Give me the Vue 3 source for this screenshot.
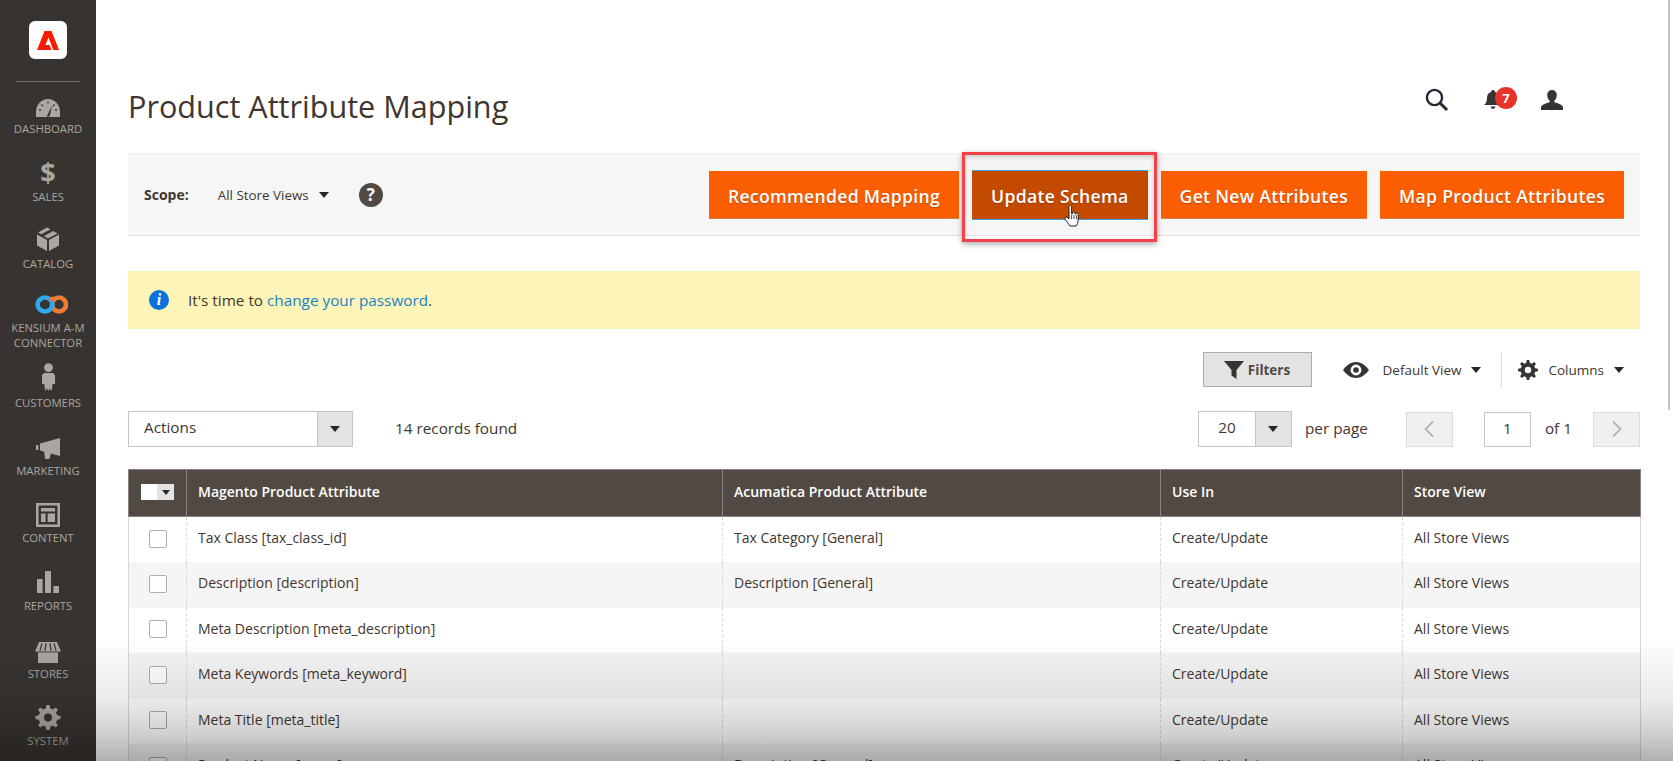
<template>
  <div class="page">
    <aside class="sidebar">
      <div class="logo-wrap">
        <div class="logo">
          <svg width="22" height="19" viewBox="0 0 22 19">
            <path d="M7.500 0h7L22 19h-5.600L11.500 6.500 8.400 14h4.100l2 5H0z" fill="#fa1a00" />
          </svg>
        </div>
      </div>
      <nav class="nav">
        <a class="nav-item">
          <svg width="32" height="30" viewBox="0 0 32 30">
            <path d="M4 28v-5a12 13 0 0 1 24 0v5z" fill="#aaa6a0" />
            <path d="M14.600 27.500l5.600-11 -2.600 11z" fill="#373330" />
            <path d="M7 21h2M9.500 15.500l1.500 1.500M16 12.500v2M22.500 15.500l-1.500 1.500M25 21h-2" stroke="#373330" stroke-width="1.300" />
          </svg>
          <span class="nav-label">Dashboard</span>
        </a>
        <a class="nav-item">
          <svg width="32" height="30" viewBox="0 0 32 30">
            <text x="16" y="25" text-anchor="middle" class="dollar">$</text>
          </svg>
          <span class="nav-label">Sales</span>
        </a>
        <a class="nav-item">
          <svg width="32" height="30" viewBox="0 0 32 30">
            <path d="M5 10.500l10 5.500v11l-10-5.500zM17 16l10-5.500v11l-10 5.500z" fill="#aaa6a0" />
            <path d="M6 8.500l9-5 3.600 1.800-9.200 5zM12 12l9.200-5 4.400 2.400-9.600 5.200z" fill="#aaa6a0" />
          </svg>
          <span class="nav-label">Catalog</span>
        </a>
        <a class="nav-item tall">
          <svg width="36" height="30" viewBox="0 0 36 30" class="kensium">
            <ellipse cx="27" cy="16.500" rx="7" ry="7" fill="none" stroke="#f07a2f" stroke-width="4.600" />
            <ellipse cx="13" cy="16.500" rx="7.400" ry="7" fill="none" stroke="#2fa8ee" stroke-width="4.600" />
            <path d="M18 11.500l4 -1.500" stroke="#f07a2f" stroke-width="4" />
          </svg>
          <span class="nav-label">Kensium A-M<br />Connector</span>
        </a>
        <a class="nav-item short">
          <svg width="32" height="30" viewBox="0 0 32 30">
            <circle cx="16.500" cy="4.600" r="4.400" fill="#aaa6a0" />
            <path d="M12 10h9l2 2v9h-2.400l-1 7-2-2.400-1.200 2.400-1.400-2.400-1.800 2.400-1-7H10v-9z" fill="#aaa6a0" />
          </svg>
          <span class="nav-label">Customers</span>
        </a>
        <a class="nav-item">
          <svg width="32" height="30" viewBox="0 0 32 30">
            <path d="M4 14h2.400v5H4zM8 12.500L28 7v18L8 19.500z" fill="#aaa6a0" />
            <path d="M12 20l7 2-1.600 6h-4.200z" fill="#aaa6a0" />
          </svg>
          <span class="nav-label">Marketing</span>
        </a>
        <a class="nav-item">
          <svg width="32" height="30" viewBox="0 0 32 30">
            <path d="M4 5h24v24H4zM6.600 7.600v18.800h18.800V7.600z" fill="#aaa6a0" />
            <path d="M9 10h14v3.400H9zM9 15.600h4.600v8.400H9zM15.600 15.600H23v8.400h-7.400z" fill="#aaa6a0" />
          </svg>
          <span class="nav-label">Content</span>
        </a>
        <a class="nav-item">
          <svg width="32" height="30" viewBox="0 0 32 30">
            <path d="M5 13h5.600v14H5zM13 5h6v22h-6zM21.400 20H27v7h-5.600z" fill="#aaa6a0" />
          </svg>
          <span class="nav-label">Reports</span>
        </a>
        <a class="nav-item">
          <svg width="32" height="30" viewBox="0 0 32 30">
            <path d="M7 8h18l4 9.400H3z" fill="#aaa6a0" />
            <path d="M10 9.400l-2 7M14 9.400l-1 7M18 9.400l1 7M22 9.400l2 7" stroke="#373330" stroke-width="1.300" />
            <path d="M6 18.400h20V29H6z" fill="#aaa6a0" />
          </svg>
          <span class="nav-label">Stores</span>
        </a>
        <a class="nav-item">
          <svg width="32" height="30" viewBox="0 0 32 30">
            <path :d="gearPath(16, 16.500, 12.600, 9.400, 4, 8)" fill="#aaa6a0" fill-rule="evenodd" />
          </svg>
          <span class="nav-label">System</span>
        </a>
      </nav>
    </aside>

    <main class="content">
      <header class="page-head">
        <h1>Product Attribute Mapping</h1>
        <div class="head-icons">
          <svg width="24" height="24" viewBox="0 0 24 24">
            <circle cx="9.500" cy="9.500" r="7.600" fill="none" stroke="#232a33" stroke-width="2.400" />
            <path d="M15 15l7 7" stroke="#232a33" stroke-width="3" />
          </svg>
          <span class="bell">
            <svg width="20" height="22" viewBox="0 0 20 22">
              <path d="M10 1a2 2 0 0 1 2 2c3 .8 4 3.400 4 6 0 4 1.400 5.600 3 7H1c1.600-1.400 3-3 3-7 0-2.600 1-5.200 4-6a2 2 0 0 1 2-2zM7.600 17.600h4.800a2.400 2.400 0 0 1-4.800 0z" fill="#373330" />
            </svg>
            <span class="badge">7</span>
          </span>
          <svg width="22" height="20" viewBox="0 0 22 20">
            <path d="M11 0c3 0 4.800 2 4.800 5 0 2.400-1 4.400-2.400 5.600v1.600c3 1 8.600 2.400 8.600 5.300V20H0v-2.500c0-2.900 5.600-4.300 8.600-5.300v-1.600C7.200 9.400 6.200 7.400 6.200 5c0-3 1.800-5 4.800-5z" fill="#373330" />
          </svg>
        </div>
      </header>

      <section class="scope-panel">
        <div class="scope">
          <span class="scope-label">Scope:</span>
          <span class="scope-value">All Store Views</span>
          <span class="caret"></span>
          <span class="help">?</span>
        </div>
        <div class="page-actions">
          <button class="action">Recommended Mapping</button>
          <span class="action-mark">
            <button class="action active">Update Schema</button>
            <span class="highlight"></span>
            <svg class="hand" width="16" height="22" viewBox="0 0 16 22">
              <path d="M5 1.500a1.300 1.300 0 0 1 2.600 0V9l1-.2V8a1.200 1.200 0 0 1 2.400 0v1l1-.1a1.100 1.100 0 0 1 2.200.4V14c0 3.500-1.500 6.500-2 7H6c-.8-1.500-4.600-6-5-7-.6-1.400.8-2.600 2-1.700L5 14z" fill="#fff" stroke="#222" stroke-width="1" />
              <path d="M7.600 10v4M10 10v4M12.400 10v4" stroke="#222" stroke-width=".8" />
            </svg>
          </span>
          <button class="action">Get New Attributes</button>
          <button class="action">Map Product Attributes</button>
        </div>
      </section>

      <div class="notice">
        <span class="info-dot">i</span>
        <span>It's time to <a class="link">change your password</a>.</span>
      </div>

      <div class="grid-tools">
        <button class="filters">
          <svg width="20" height="18" viewBox="0 0 20 18">
            <path d="M0 0h20l-7.500 9v9l-5-3.500V9z" fill="#373330" />
          </svg>
          Filters
        </button>
        <div class="view-switch">
          <svg width="26" height="16" viewBox="0 0 26 16">
            <path d="M13 0c6 0 10.500 4.500 13 8-2.500 3.500-7 8-13 8S2.500 11.500 0 8c2.500-3.500 7-8 13-8zm0 2.600a5.400 5.400 0 1 0 0 10.800 5.400 5.400 0 0 0 0-10.800z" fill="#373330" />
            <circle cx="13" cy="8" r="2.800" fill="#373330" />
          </svg>
          <span class="tool-text">Default View</span>
          <span class="caret"></span>
        </div>
        <div class="columns-switch">
          <svg width="20" height="20" viewBox="0 0 20 20">
            <path :d="gearPath(10, 10, 10, 7.400, 3.200, 8)" fill="#373330" fill-rule="evenodd" />
          </svg>
          <span class="tool-text">Columns</span>
          <span class="caret"></span>
        </div>
      </div>

      <div class="grid-pager">
        <div class="select actions-select">
          <span class="select-value">Actions</span>
          <span class="select-btn"><span class="caret"></span></span>
        </div>
        <span class="records">14 records found</span>
        <div class="pager">
          <div class="select size-select">
            <span class="select-value">20</span>
            <span class="select-btn"><span class="caret"></span></span>
          </div>
          <span class="per-page">per page</span>
          <span class="page-btn prev">
            <svg width="12" height="18" viewBox="0 0 12 18"><path d="M10 1.500L2.500 9l7.500 7.500" fill="none" stroke="#b5b2af" stroke-width="1.800" /></svg>
          </span>
          <span class="page-input">1</span>
          <span class="of-pages">of 1</span>
          <span class="page-btn next">
            <svg width="12" height="18" viewBox="0 0 12 18"><path d="M2 1.500L9.500 9 2 16.500" fill="none" stroke="#b5b2af" stroke-width="1.800" /></svg>
          </span>
        </div>
      </div>

      <table class="grid">
        <colgroup>
          <col class="col-check" />
          <col class="col-magento" />
          <col class="col-acumatica" />
          <col class="col-use" />
          <col class="col-store" />
        </colgroup>
        <thead>
          <tr>
            <th class="check-cell">
              <span class="head-check"><i></i><b><span class="caret"></span></b></span>
            </th>
            <th>Magento Product Attribute</th>
            <th>Acumatica Product Attribute</th>
            <th>Use In</th>
            <th>Store View</th>
          </tr>
        </thead>
        <tbody>
          <tr v-for="row in rows" :key="row.magento">
            <td class="check-cell"><span class="checkbox"></span></td>
            <td>{{ row.magento }}</td>
            <td>{{ row.acumatica }}</td>
            <td>Create/Update</td>
            <td>All Store Views</td>
          </tr>
        </tbody>
      </table>
    </main>

    <div class="scroll-thumb"></div>
    <div class="video-shade"></div>
  </div>
</template>

<script setup>
const rows = [
  { magento: "Tax Class [tax_class_id]", acumatica: "Tax Category [General]" },
  { magento: "Description [description]", acumatica: "Description [General]" },
  { magento: "Meta Description [meta_description]", acumatica: "" },
  { magento: "Meta Keywords [meta_keyword]", acumatica: "" },
  { magento: "Meta Title [meta_title]", acumatica: "" },
  { magento: "Product Name [name]", acumatica: "Description [General]" },
];

// cog outline, used by the System and Columns icons
function gearPath(cx, cy, rOut, rIn, hole, teeth) {
  const step = (Math.PI * 2) / teeth;
  let d = "";
  for (let i = 0; i < teeth; i++) {
    const a = i * step - Math.PI / 2;
    const pts = [
      [rIn, a - step * 0.3],
      [rOut, a - step * 0.16],
      [rOut, a + step * 0.16],
      [rIn, a + step * 0.3],
    ];
    for (const [r, t] of pts) {
      const x = (cx + r * Math.cos(t)).toFixed(2);
      const y = (cy + r * Math.sin(t)).toFixed(2);
      d += (d ? "L" : "M") + x + " " + y;
    }
  }
  d += "Z";
  d += `M${cx - hole} ${cy}a${hole} ${hole} 0 1 0 ${hole * 2} 0a${hole} ${hole} 0 1 0 ${-hole * 2} 0Z`;
  return d;
}
</script>

<style scoped>
.page {
  position: relative;
  display: flex;
  width: 1673px;
  height: 761px;
  overflow: hidden;
  background: #fff;
  font-family: "Open Sans", sans-serif;
  color: #41362f;
}
.sidebar {
  flex: 0 0 96px;
  background: #373330;
}
.logo-wrap {
  height: 82px;
  margin: 0 16px;
  padding-top: 21px;
  box-sizing: border-box;
  border-bottom: 1px solid #736e6a;
}
.logo {
  display: flex;
  align-items: center;
  justify-content: center;
  width: 38px;
  height: 38px;
  margin: 0 auto;
  background: #fff;
  border-radius: 6px;
}
.nav {
  display: flex;
  flex-direction: column;
  align-items: center;
}
.nav-item {
  display: flex;
  flex-direction: column;
  align-items: center;
  justify-content: flex-end;
  height: 67.600px;
  color: #aaa6a0;
}
.nav-item:first-child {
  height: 54px;
}
.nav-item.tall {
  height: 79px;
}
.nav-item.short {
  height: 60px;
}
.kensium {
  margin-left: 4px;
}
.nav-label {
  margin-top: 2px;
  font-size: 11.300px;
  line-height: 15px;
  text-align: center;
  text-transform: uppercase;
  white-space: nowrap;
}
.dollar {
  font-family: "Open Sans", sans-serif;
  font-size: 27px;
  font-weight: 700;
  fill: #aaa6a0;
}
.content {
  flex: 1;
  min-width: 0;
  padding: 0 33px 0 32px;
}
.page-head {
  display: flex;
  align-items: center;
  justify-content: space-between;
  height: 153px;
  padding-top: 58px;
  box-sizing: border-box;
}
h1 {
  margin: 0;
  font-size: 30.600px;
  font-weight: 400;
  line-height: 42px;
  color: #41362f;
}
.head-icons {
  display: flex;
  align-items: center;
  margin: -11px 77px 0 0;
}
.bell {
  position: relative;
  display: flex;
  margin: 0 38px 0 34px;
}
.badge {
  position: absolute;
  left: 12px;
  top: -2px;
  width: 22px;
  height: 22px;
  border-radius: 50%;
  background: #e8332a;
  color: #fff;
  font-size: 13px;
  font-weight: 700;
  line-height: 22px;
  text-align: center;
}
.scope-panel {
  display: flex;
  align-items: center;
  justify-content: space-between;
  height: 83px;
  padding: 0 16px;
  box-sizing: border-box;
  background: #f6f6f6;
  border-top: 1px solid #efefef;
  border-bottom: 1px solid #e3e3e3;
}
.scope {
  display: flex;
  align-items: center;
  font-size: 13.400px;
}
.scope-label {
  font-size: 14px;
  font-weight: 700;
  color: #41362f;
  margin-right: 29px;
}
.scope-value {
  color: #41362f;
  margin-right: 10px;
}
.help {
  width: 24px;
  height: 24px;
  margin-left: 30px;
  border-radius: 50%;
  background: #514943;
  color: #fff;
  font-size: 17px;
  font-weight: 700;
  line-height: 24px;
  text-align: center;
}
.caret {
  display: inline-block;
  width: 0;
  height: 0;
  border-left: 5px solid transparent;
  border-right: 5px solid transparent;
  border-top: 6px solid #2b2622;
}
.page-actions {
  display: flex;
  align-items: center;
  gap: 13px;
}
.action {
  height: 48px;
  padding: 3px 19px 0;
  border: 0;
  border-bottom: 1px solid #d9814a;
  background: #fa5e00;
  color: #fff;
  font-family: inherit;
  font-size: 17.600px;
  font-weight: 600;
  letter-spacing: 0.3px;
  text-shadow: 0 1px 1px rgba(0, 0, 0, 0.25);
}
.action.active {
  height: 50px;
  padding-top: 2px;
  border-top: 1px solid #3aa3e3;
  border-bottom: 1px solid #3aa3e3;
  background: #c44a00;
}
.action-mark {
  position: relative;
  display: flex;
}
.highlight {
  position: absolute;
  left: -10px;
  right: -9px;
  top: -18px;
  bottom: -22px;
  border: 3px solid #f2414b;
  box-shadow: 0 2px 6px rgba(0, 0, 0, 0.35), inset 0 2px 5px rgba(0, 0, 0, 0.2);
}
.hand {
  position: absolute;
  left: 92px;
  top: 35px;
}
.notice {
  display: flex;
  align-items: center;
  height: 58px;
  margin-top: 35px;
  padding-left: 21px;
  background: #fdf5b8;
  font-size: 15.300px;
  color: #41362f;
}
.info-dot {
  width: 20px;
  height: 20px;
  margin-right: 19px;
  border-radius: 50%;
  background: #0a72d8;
  color: #fff;
  font-family: "Liberation Serif", serif;
  font-size: 16px;
  font-style: italic;
  font-weight: 700;
  line-height: 20px;
  text-align: center;
}
.link {
  color: #1a82c4;
}
.grid-tools {
  display: flex;
  align-items: center;
  justify-content: flex-end;
  height: 35px;
  margin-top: 23px;
}
.filters {
  display: flex;
  align-items: center;
  justify-content: center;
  gap: 4px;
  width: 109px;
  height: 35px;
  border: 1px solid #adadad;
  background: #e3e3e3;
  color: #514943;
  font-family: inherit;
  font-size: 13.500px;
  font-weight: 700;
}
.view-switch,
.columns-switch {
  display: flex;
  align-items: center;
  height: 35px;
}
.view-switch {
  margin-left: 31px;
  padding-right: 20px;
  border-right: 1px solid #dcdcdc;
}
.columns-switch {
  margin: 0 16px 0 16px;
}
.view-switch svg {
  margin-right: 14px;
}
.columns-switch svg {
  margin-right: 10px;
}
.tool-text {
  margin-right: 10px;
  font-size: 13.500px;
  color: #41362f;
}
.grid-pager {
  display: flex;
  align-items: center;
  height: 36px;
  margin-top: 24px;
  font-size: 15.300px;
}
.select {
  display: flex;
  height: 36px;
  box-sizing: border-box;
  border: 1px solid #c7c5c3;
  background: #fff;
}
.select-value {
  flex: 1;
  line-height: 31px;
  color: #41362f;
}
.select-btn {
  display: flex;
  align-items: center;
  justify-content: center;
  background: #e3e3e3;
  border-left: 1px solid #c7c5c3;
}
.actions-select {
  width: 225px;
}
.actions-select .select-value {
  padding-left: 15px;
}
.actions-select .select-btn {
  width: 34px;
}
.records {
  margin: -2px 0 0 42px;
}
.pager {
  display: flex;
  align-items: center;
  margin-left: auto;
}
.size-select {
  width: 94px;
}
.size-select .select-value {
  text-align: center;
}
.size-select .select-btn {
  width: 35px;
}
.per-page {
  margin: -2px 38px 0 13px;
}
.page-btn {
  display: flex;
  align-items: center;
  justify-content: center;
  width: 47px;
  height: 35px;
  box-sizing: border-box;
  border: 1px solid #dcdbda;
  background: #f0f0f0;
}
.page-input {
  width: 47px;
  height: 35px;
  margin-left: 31px;
  box-sizing: border-box;
  border: 1px solid #c7c5c3;
  line-height: 31px;
  text-align: center;
}
.of-pages {
  margin: -2px 21px 0 14px;
}
.grid {
  width: 1512px;
  margin-top: 22px;
  border-collapse: collapse;
  table-layout: fixed;
  font-size: 14px;
}
.col-check {
  width: 58px;
}
.col-magento {
  width: 536px;
}
.col-acumatica {
  width: 438px;
}
.col-use {
  width: 242px;
}
.col-store {
  width: 238px;
}
th {
  height: 47px;
  padding: 0 0 4px 11px;
  box-sizing: border-box;
  border: 1px solid #8a837f;
  background: #514943;
  color: #fff;
  font-weight: 600;
  text-align: left;
}
td {
  height: 45.500px;
  padding: 0 0 4px 11px;
  box-sizing: border-box;
  border-left: 1px dashed #d9d9d9;
  border-right: 1px dashed #d9d9d9;
  color: #41362f;
  white-space: nowrap;
}
td:first-child {
  border-left: 1px solid #d6d6d6;
}
td:last-child {
  border-right: 1px solid #d6d6d6;
}
tbody tr:nth-child(even) td {
  background: #f5f5f5;
}
.check-cell {
  padding: 0 0 2px !important;
  text-align: center;
}
.checkbox {
  display: block;
  width: 18px;
  height: 18px;
  margin: 0 auto 0 20px;
  box-sizing: border-box;
  border: 1px solid #adadad;
  border-radius: 2px;
  background: #fff;
}
.head-check {
  display: flex;
  margin-left: 12px;
  width: 33px;
  height: 16px;
}
.head-check i {
  flex: 1;
  background: #fff;
}
.head-check b {
  display: flex;
  align-items: center;
  justify-content: center;
  width: 17px;
  background: #e3e3e3;
}
.head-check .caret {
  border-left-width: 4px;
  border-right-width: 4px;
  border-top-width: 5px;
}
.scroll-thumb {
  position: absolute;
  left: 1668px;
  top: 0;
  width: 2px;
  height: 410px;
  background: #c4c4c4;
}
.video-shade {
  position: absolute;
  left: 0;
  right: 0;
  bottom: 0;
  height: 125px;
  pointer-events: none;
  background: linear-gradient(
    to bottom,
    rgba(0, 0, 0, 0),
    rgba(0, 0, 0, 0.08) 50%,
    rgba(0, 0, 0, 0.17) 75%,
    rgba(0, 0, 0, 0.31)
  );
}
</style>

<style>
html,
body {
  margin: 0;
  overflow: hidden;
}
</style>
